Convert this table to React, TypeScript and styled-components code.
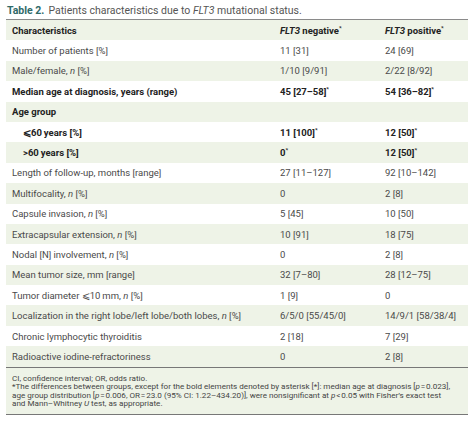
import React from 'react'
import styled, { createGlobalStyle } from 'styled-components'

const GlobalStyle = createGlobalStyle`
  html, body {
    margin: 0;
    padding: 0;
    background: #ffffff;
  }
  body {
    font-family: Roboto, "Liberation Sans", sans-serif;
    color: #4a4a4a;
  }
`

const Page = styled.div`
  width: 474px;
  height: 425px;
  padding: 4px 6px 0 6px;
  box-sizing: border-box;
  display: flex;
  flex-direction: column;
`

const Caption = styled.div`
  font-size: 10.5px;
  line-height: 14px;
  color: #555;
  padding-left: 1px;
  height: 15px;
`

const CaptionLabel = styled.span`
  color: #2f6a69;
  font-weight: 700;
  margin-right: 4px;
`

const Table = styled.div`
  display: flex;
  flex-direction: column;
  border-top: 1px solid #8a8a8a;
  font-size: 9.5px;
`

const Row = styled.div<{ $shade?: boolean; $bold?: boolean }>`
  display: grid;
  grid-template-columns: 268px 105px 89px;
  align-items: center;
  height: 20.4px;
  background: ${p => (p.$shade ? '#eef3e7' : '#ffffff')};
  font-weight: ${p => (p.$bold ? 700 : 400)};
  color: ${p => (p.$bold ? '#222' : '#4a4a4a')};
`

const Cell = styled.div<{ $indent?: boolean }>`
  padding-left: ${p => (p.$indent ? '17px' : '6px')};
  white-space: nowrap;
`

const HeadCell = styled.div`
  padding-left: 6px;
  font-weight: 700;
  color: #222;
  white-space: nowrap;
`

const Star = styled.span`
  font-size: 6px;
  vertical-align: super;
  line-height: 0;
`

const Note = styled.div`
  display: flex;
  flex-direction: column;
  background: #eef3e7;
  border-top: 1px solid #777;
  border-bottom: 1px solid #777;
  padding: 6px 6px 6px 6px;
  font-size: 8.1px;
  color: #444;
`

const NoteLine = styled.div`
  line-height: 8.6px;
  white-space: nowrap;
`

type Item = { label: React.ReactNode; neg: React.ReactNode; pos: React.ReactNode; bold?: boolean; indent?: boolean }

const n = <i>n</i>

const rows: Item[] = [
  { label: 'Number of patients [%]', neg: '11 [31]', pos: '24 [69]' },
  { label: <>Male/female, {n} [%]</>, neg: '1/10 [9/91]', pos: '2/22 [8/92]' },
  { label: 'Median age at diagnosis, years (range)', neg: <>45 [27–58]<Star>*</Star></>, pos: <>54 [36–82]<Star>*</Star></>, bold: true },
  { label: 'Age group', neg: '', pos: '', bold: true },
  { label: <>⩽60&thinsp;years [%]</>, neg: <>11 [100]<Star>*</Star></>, pos: <>12 [50]<Star>*</Star></>, bold: true, indent: true },
  { label: <>&gt;60&thinsp;years [%]</>, neg: <>0<Star>*</Star></>, pos: <>12 [50]<Star>*</Star></>, bold: true, indent: true },
  { label: 'Length of follow-up, months [range]', neg: '27 [11–127]', pos: '92 [10–142]' },
  { label: <>Multifocality, {n} [%]</>, neg: '0', pos: '2 [8]' },
  { label: <>Capsule invasion, {n} [%]</>, neg: '5 [45]', pos: '10 [50]' },
  { label: <>Extracapsular extension, {n} [%]</>, neg: '10 [91]', pos: '18 [75]' },
  { label: <>Nodal [N] involvement, {n} [%]</>, neg: '0', pos: '2 [8]' },
  { label: 'Mean tumor size, mm [range]', neg: '32 [7–80]', pos: '28 [12–75]' },
  { label: <>Tumor diameter ⩽10&thinsp;mm, {n} [%]</>, neg: '1 [9]', pos: '0' },
  { label: <>Localization in the right lobe/left lobe/both lobes, {n} [%]</>, neg: '6/5/0 [55/45/0]', pos: '14/9/1 [58/38/4]' },
  { label: 'Chronic lymphocytic thyroiditis', neg: '2 [18]', pos: '7 [29]' },
  { label: 'Radioactive iodine-refractoriness', neg: '0', pos: '2 [8]' },
]

export default function App() {
  return (
    <>
      <GlobalStyle />
      <Page>
        <Caption>
          <CaptionLabel>Table 2.</CaptionLabel>
          Patients characteristics due to <i>FLT3</i> mutational status.
        </Caption>
        <Table>
          <Row $shade>
            <HeadCell>Characteristics</HeadCell>
            <HeadCell><i>FLT3</i> negative<Star>*</Star></HeadCell>
            <HeadCell><i>FLT3</i> positive<Star>*</Star></HeadCell>
          </Row>
          {rows.map((r, i) => (
            <Row key={i} $shade={i % 2 === 1} $bold={r.bold}>
              <Cell $indent={r.indent}>{r.label}</Cell>
              <Cell>{r.neg}</Cell>
              <Cell>{r.pos}</Cell>
            </Row>
          ))}
        </Table>
        <Note>
          <NoteLine>CI, confidence interval; OR, odds ratio.</NoteLine>
          <NoteLine>
            *The differences between groups, except for the bold elements denoted by asterisk [*]: median age at diagnosis [<i>p</i>&#8202;=&#8202;0.023],
          </NoteLine>
          <NoteLine>
            age group distribution [<i>p</i>&#8202;=&#8202;0.006, OR&#8202;=&#8202;23.0 (95% CI: 1.22–434.20)], were nonsignificant at <i>p</i>&#8202;&lt;&#8202;0.05 with Fisher’s exact test
          </NoteLine>
          <NoteLine>and Mann–Whitney <i>U</i> test, as appropriate.</NoteLine>
        </Note>
      </Page>
    </>
  )
}
